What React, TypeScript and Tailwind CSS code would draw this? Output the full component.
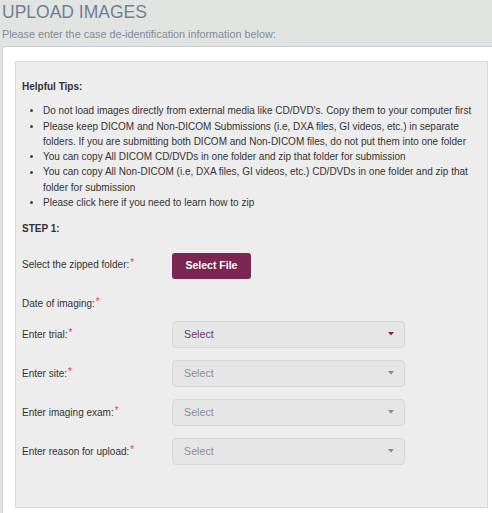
import React from "react";

const tips = [
  "Do not load images directly from external media like CD/DVD's. Copy them to your computer first",
  "Please keep DICOM and Non-DICOM Submissions (i.e, DXA files, GI videos, etc.) in separate folders. If you are submitting both DICOM and Non-DICOM files, do not put them into one folder",
  "You can copy All DICOM CD/DVDs in one folder and zip that folder for submission",
  "You can copy All Non-DICOM (i.e, DXA files, GI videos, etc.) CD/DVDs in one folder and zip that folder for submission",
  "Please click here if you need to learn how to zip",
];

function Req() {
  return <span className="text-[#e8413c] align-[2px] ml-[1px]">*</span>;
}

function Caret({ color }: { color: string }) {
  return (
    <svg width="6" height="4" viewBox="0 0 6 4" className="shrink-0">
      <path d="M0 0 L6 0 L3 3.5 Z" fill={color} />
    </svg>
  );
}

function SelectBox({ active }: { active?: boolean }) {
  return (
    <div className="w-[233px] h-[27px] flex items-center justify-between pl-[11px] pr-[10px] bg-[#e6e6e6] border border-[#d3d9e0] rounded-[4px]">
      <span className={"text-[10.7px] leading-none " + (active ? "text-[#6b3a68]" : "text-[#8a8f96]")}>Select</span>
      <Caret color={active ? "#7b2551" : "#8a8a8a"} />
    </div>
  );
}

function SelectRow({ label, active, first }: { label: string; active?: boolean; first?: boolean }) {
  return (
    <div className={"flex items-center " + (first ? "mt-[10px]" : "mt-[12px]")}>
      <div className="w-[150px] leading-[15.3px] pb-[2px]">
        {label}
        <Req />
      </div>
      <SelectBox active={active} />
    </div>
  );
}

export default function App() {
  return (
    <div className="w-[492px] h-[513px] overflow-hidden bg-[#e2e4e1] font-['Liberation_Sans',Arial,sans-serif]">
      <h1 className="pl-[2px] pt-[2px] text-[17.5px] leading-[20px] text-[#6f7f96]">UPLOAD IMAGES</h1>
      <p className="pl-[2px] mt-[5px] text-[10.8px] leading-[14px] text-[#7f8b9b]">
        Please enter the case de-identification information below:
      </p>
      <div className="ml-[2px] mt-[5px] bg-white border-l border-t border-[#c8cdd8] rounded-tl-[4px] pl-[12px] pr-[4px] pt-[14px] pb-[20px]">
        <div className="h-[447px] bg-[#ededed] border border-[#d9d9d9] px-[6px] pt-[17px] text-[10px] leading-[15.3px] text-[#333333]">
          <div className="font-bold mb-[9px]">Helpful Tips:</div>
          <ul>
            {tips.map((t) => (
              <li key={t} className="flex">
                <span className="w-[21px] shrink-0 h-[15.3px] flex items-center pl-[8px]">
                  <span className="w-[3px] h-[3px] rounded-full bg-[#444444]" />
                </span>
                <span className="pr-[6px]">{t}</span>
              </li>
            ))}
          </ul>
          <div className="font-bold mt-[11px]">STEP 1:</div>
          <div className="flex items-start mt-[16px]">
            <div className="w-[150px] pt-[2px]">
              Select the zipped folder:
              <Req />
            </div>
            <button className="w-[79px] h-[26px] bg-[#7b2551] rounded-[3px] text-white font-bold text-[10.5px] leading-none">
              Select File
            </button>
          </div>
          <div className="mt-[15px]">
            Date of imaging:
            <Req />
          </div>
          <SelectRow label="Enter trial:" active first />
          <SelectRow label="Enter site:" />
          <SelectRow label="Enter imaging exam:" />
          <SelectRow label="Enter reason for upload:" />
        </div>
      </div>
    </div>
  );
}
